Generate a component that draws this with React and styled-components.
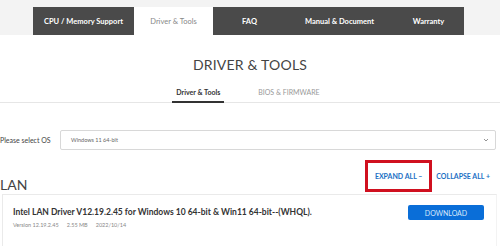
import React from "react";
import styled, { createGlobalStyle } from "styled-components";

const Global = createGlobalStyle`
  body {
    margin: 0;
    background: #fff;
    font-family: Lato, "Open Sans", sans-serif;
    color: #333;
  }
`;

const Page = styled.div`
  width: 500px;
  height: 246px;
  overflow: hidden;
`;

const TopBand = styled.div`
  background: #f3f3f3;
  height: 35px;
  display: flex;
  align-items: flex-end;
  padding-left: 33px;
`;

const TabBar = styled.div`
  display: flex;
  height: 28px;
  background: #4a4a4a;
`;

const Tab = styled.div`
  width: ${(p) => p.w}px;
  display: flex;
  align-items: center;
  justify-content: center;
  font-size: 7.5px;
  font-weight: ${(p) => (p.active ? 400 : 700)};
  color: ${(p) => (p.active ? "#888" : "#fff")};
  background: ${(p) => (p.active ? "#fff" : "transparent")};
`;

const Heading = styled.h1`
  margin: 20px 0 0;
  text-align: center;
  font-size: 14px;
  font-weight: 400;
  color: #444;
  letter-spacing: 0.2px;
  line-height: 20px;
`;

const SubTabs = styled.div`
  display: flex;
  justify-content: center;
  gap: 30px;
  margin-top: 13px;
  border-bottom: 1px solid #e6e6e6;
  padding-right: 4px;
`;

const SubTab = styled.div`
  font-size: 7px;
  padding: 0 4px 5px;
  color: ${(p) => (p.active ? "#333" : "#999")};
  font-weight: ${(p) => (p.active ? 700 : 400)};
  border-bottom: 2px solid ${(p) => (p.active ? "#333" : "transparent")};
  margin-bottom: -1px;
`;

const OsRow = styled.div`
  display: flex;
  align-items: center;
  gap: 8px;
  margin-top: 27px;
  padding-right: 4px;
`;

const OsLabel = styled.div`
  font-size: 7px;
  color: #444;
  width: 52px;
  white-space: nowrap;
`;

const Select = styled.div`
  flex: 1;
  height: 18px;
  border: 1px solid #d8d8d8;
  border-radius: 2px;
  display: flex;
  align-items: center;
  justify-content: space-between;
  padding: 0 6px 0 10px;
  font-size: 5.5px;
  color: #666;
`;

const Actions = styled.div`
  display: flex;
  justify-content: flex-end;
  align-items: center;
  gap: 4px;
  margin-top: 10px;
  padding-right: 10px;
`;

const ActionLink = styled.div`
  font-size: 7px;
  color: #1a6fc4;
  font-weight: 700;
  white-space: nowrap;
  padding: ${(p) => (p.boxed ? "9px 7px" : "0")};
  border: ${(p) => (p.boxed ? "3px solid #d0101f" : "none")};
`;

const SectionTitle = styled.div`
  font-size: 14px;
  color: #444;
  margin-top: -15px;
  line-height: 16px;
`;

const Card = styled.div`
  margin: 1px 3px 0 2px;
  border: 1px solid #eaeaea;
  border-right-color: #f3f3f3;
  height: 60px;
  display: flex;
  justify-content: space-between;
  align-items: flex-start;
  padding: 12px 12px 0 10px;
`;

const DriverName = styled.div`
  font-size: 8.5px;
  font-weight: 700;
  color: #333;
`;

const Meta = styled.div`
  display: flex;
  gap: 8px;
  margin-top: 5px;
  font-size: 5.5px;
  color: #888;
`;

const DownloadButton = styled.button`
  width: 76px;
  height: 15px;
  border: none;
  border-radius: 2px;
  background: #0a6ed8;
  color: #d9e9fb;
  font-family: inherit;
  font-size: 7px;
  margin-top: -2px;
`;

const Chevron = () => (
  <svg width="6" height="4" viewBox="0 0 6 4">
    <path d="M1 1l2 2 2-2" fill="none" stroke="#777" strokeWidth="0.8" />
  </svg>
);

export default function App() {
  return (
    <Page>
      <Global />
      <TopBand>
        <TabBar>
          <Tab w={101}>CPU / Memory Support</Tab>
          <Tab w={79} active>
            Driver &amp; Tools
          </Tab>
          <Tab w={73}>FAQ</Tab>
          <Tab w={107}>Manual &amp; Document</Tab>
          <Tab w={71}>Warranty</Tab>
        </TabBar>
      </TopBand>
      <Heading>DRIVER &amp; TOOLS</Heading>
      <SubTabs>
        <SubTab active>Driver &amp; Tools</SubTab>
        <SubTab>BIOS &amp; FIRMWARE</SubTab>
      </SubTabs>
      <OsRow>
        <OsLabel>Please select OS</OsLabel>
        <Select>
          <span>Windows 11 64-bit</span>
          <Chevron />
        </Select>
      </OsRow>
      <Actions>
        <ActionLink boxed>EXPAND ALL –</ActionLink>
        <ActionLink>COLLAPSE ALL +</ActionLink>
      </Actions>
      <SectionTitle>LAN</SectionTitle>
      <Card>
        <div>
          <DriverName>
            Intel LAN Driver V12.19.2.45 for Windows 10 64-bit &amp; Win11 64-bit--(WHQL).
          </DriverName>
          <Meta>
            <span>Version 12.19.2.45</span>
            <span>2.55 MB</span>
            <span>2022/10/14</span>
          </Meta>
        </div>
        <DownloadButton>DOWNLOAD</DownloadButton>
      </Card>
    </Page>
  );
}
